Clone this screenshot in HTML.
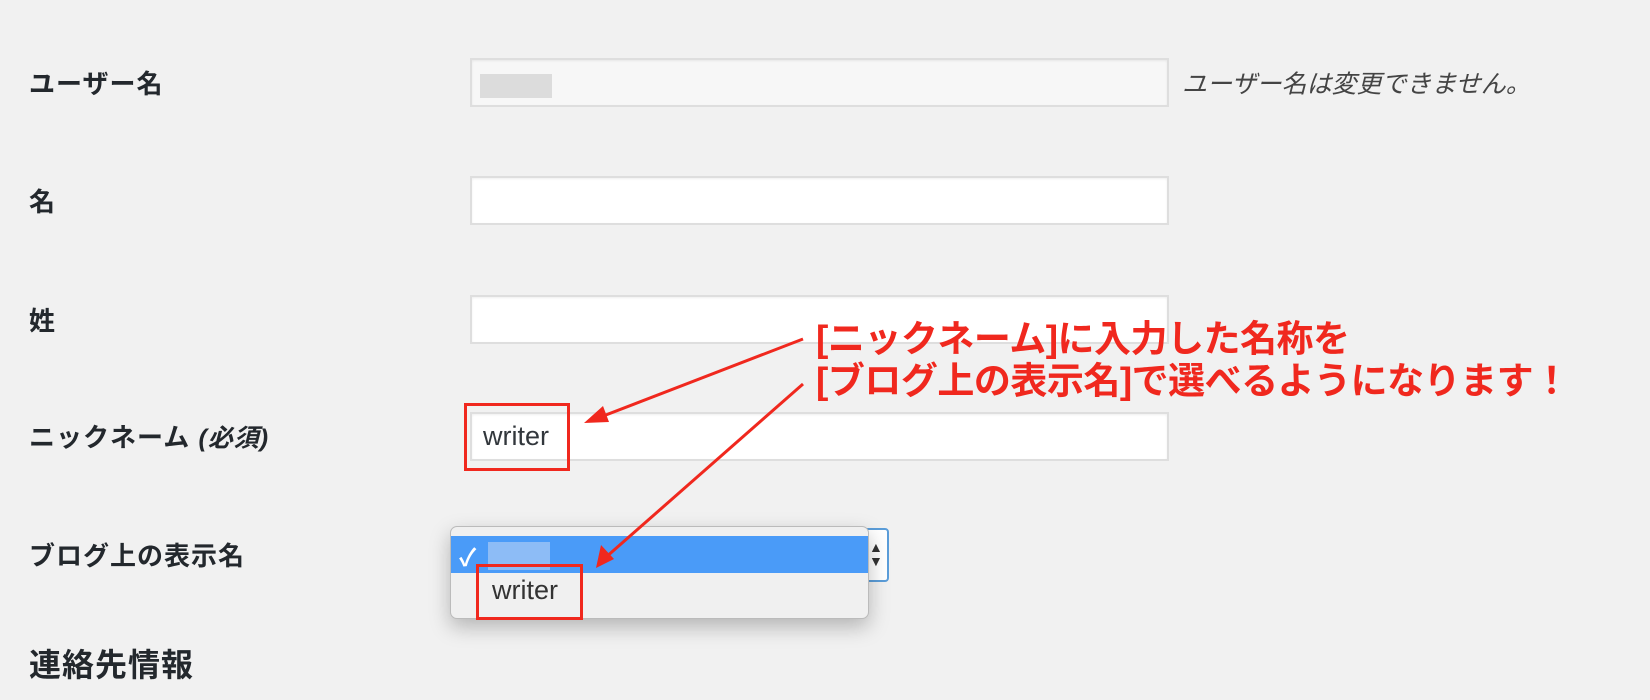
<!DOCTYPE html>
<html><head><meta charset="utf-8"><style>
*{margin:0;padding:0;box-sizing:border-box}
body{width:1650px;height:700px;background:#f1f1f1;position:relative;overflow:hidden;font-family:"Liberation Sans","Noto Sans CJK JP",sans-serif;color:#23282d}
.lbl{position:absolute;left:29px;font-size:26px;letter-spacing:1px;font-weight:bold;line-height:1;transform:translateY(-50%)}
.inp{position:absolute;left:470px;width:699px;height:49px;background:#fff;border:2px solid #dedede;box-shadow:inset 0 1px 2px rgba(0,0,0,.07)}
.red{position:absolute;border:3px solid #f0281e}
.ann{position:absolute;left:816px;font-size:37px;font-weight:bold;color:#f0281e;line-height:1;transform:translateY(-50%);white-space:nowrap;letter-spacing:-0.5px}
</style></head><body>
<div class="lbl" style="top:84px">ユーザー名</div>
<div class="lbl" style="top:202px">名</div>
<div class="lbl" style="top:321px">姓</div>
<div class="lbl" style="top:438px">ニックネーム <i style="font-size:25px">(必須)</i></div>
<div class="lbl" style="top:556px">ブログ上の表示名</div>
<div class="lbl" style="top:665px;font-size:32px">連絡先情報</div>

<div class="inp" style="top:58px;background:#f7f7f7"><div style="position:absolute;left:8px;top:14px;width:72px;height:24px;background:#dcdcdc"></div></div>
<div style="position:absolute;left:1182px;top:85px;transform:translateY(-50%);font-size:25px;font-style:italic;color:#444;line-height:1">ユーザー名は変更できません。</div>
<div class="inp" style="top:176px"></div>
<div class="inp" style="top:295px"></div>
<div class="inp" style="top:412px"><span style="position:absolute;left:11px;top:7px;font-size:27px;color:#32373c">writer</span></div>

<div style="position:absolute;left:470px;top:528px;width:419px;height:54px;border:2px solid #5b9dd9;border-radius:4px;background:#fff"></div>
<div style="position:absolute;left:869px;top:540px;font-size:14px;line-height:14px;color:#333">▲<br>▼</div>
<div style="position:absolute;left:450px;top:526px;width:419px;height:93px;background:#f0f0f0;border:1px solid #bbb;border-radius:7px;box-shadow:0 8px 20px rgba(0,0,0,.25);overflow:hidden">
  <div style="position:absolute;left:0;top:9px;width:100%;height:37px;background:#4a9bf8"></div>
  <div style="position:absolute;left:8px;top:11px;color:#fff;font-size:24px;font-weight:bold">✓</div>
  <div style="position:absolute;left:37px;top:15px;width:62px;height:28px;background:#8dbcf6"></div>
  <div style="position:absolute;left:41px;top:48px;font-size:27px;color:#333">writer</div>
</div>

<div class="red" style="left:464px;top:403px;width:106px;height:68px"></div>
<div class="red" style="left:476px;top:564px;width:107px;height:56px"></div>

<svg style="position:absolute;left:0;top:0" width="1650" height="700">
<line x1="803" y1="339" x2="598" y2="418" stroke="#f0281e" stroke-width="3"/>
<path d="M584,423 L603,406 L609,422z" fill="#f0281e"/>
<line x1="803" y1="384" x2="605" y2="558" stroke="#f0281e" stroke-width="3"/>
<path d="M596,568 L601,545 L614,559z" fill="#f0281e"/>
</svg>
<div class="ann" style="top:339px">[ニックネーム]に入力した名称を</div>
<div class="ann" style="top:381px">[ブログ上の表示名]で選べるようになります！</div>
</body></html>
